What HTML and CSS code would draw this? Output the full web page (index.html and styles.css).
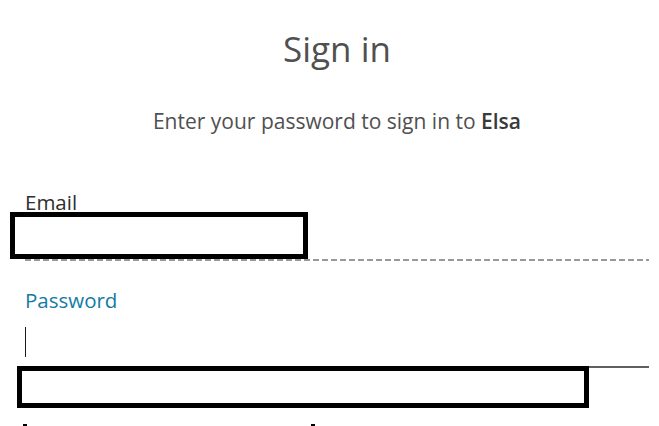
FILE: index.html
```html
<!DOCTYPE html>
<html lang="en">
<head>
<meta charset="utf-8">
<title>Sign in</title>
<link rel="stylesheet" href="styles.css">
</head>
<body>
<main class="page">
  <h1 class="title">Sign in</h1>
  <p class="subtitle">Enter your password to sign in to <strong>Elsa</strong></p>

  <div class="field field-email">
    <label class="label">Email</label>
    <div class="input input-dashed"></div>
    <div class="redact redact-email"></div>
  </div>

  <div class="field field-password">
    <label class="label label-active">Password</label>
    <div class="input input-active"><span class="caret"></span></div>
    <div class="redact redact-password"></div>
  </div>

  <div class="marks">
    <span class="mark mark-a"></span>
    <span class="mark mark-b"></span>
  </div>
</main>
</body>
</html>
```

FILE: styles.css
```css
html, body {
  margin: 0;
  padding: 0;
  background: #ffffff;
}

body {
  font-family: "Open Sans", Lato, "Liberation Sans", sans-serif;
  color: #2e2e2e;
  overflow: hidden;
}

.page {
  position: relative;
  margin: 0 10px 0 25px;
  padding-top: 29px;
  height: 397px;
}

.title {
  margin: 0;
  font-size: 35px;
  line-height: 40px;
  font-weight: 400;
  color: #505050;
  text-align: center;
}

.subtitle {
  margin: 40px 0 0;
  font-size: 21px;
  line-height: 24px;
  color: #505050;
  text-align: center;
}

.subtitle strong {
  font-weight: 600;
  color: #3a3a3a;
}

.field {
  display: flex;
  flex-direction: column;
}

.field-email {
  margin-top: 57px;
}

.field-password {
  margin-top: 27px;
}

.label {
  font-size: 20.5px;
  line-height: 24px;
  color: #2e2e2e;
}

.label-active {
  color: #127ba4;
}

.input {
  box-sizing: border-box;
}

.input-dashed {
  height: 47px;
  border-bottom: 2px solid transparent;
  background-image: repeating-linear-gradient(to right, #999999 0 6px, transparent 6px 9px);
  background-size: 100% 2px;
  background-position: left bottom;
  background-repeat: no-repeat;
  background-origin: border-box;
}

.input-active {
  height: 56px;
  padding-top: 15px;
  border-bottom: 2px solid #606060;
}

.caret {
  display: block;
  width: 1px;
  height: 30px;
  background: #1a1a1a;
}

.redact {
  position: absolute;
  box-sizing: border-box;
  border: 5px solid #000000;
  background: #ffffff;
}

.redact-email {
  left: -15px;
  top: 212px;
  width: 298px;
  height: 47px;
}

.redact-password {
  left: -8px;
  top: 366px;
  width: 572px;
  height: 42px;
}

.marks {
  display: flex;
  margin-top: 56px;
  margin-left: -2px;
  gap: 284px;
}

.mark {
  display: block;
  width: 4px;
  height: 2px;
  background: #000000;
}
```
